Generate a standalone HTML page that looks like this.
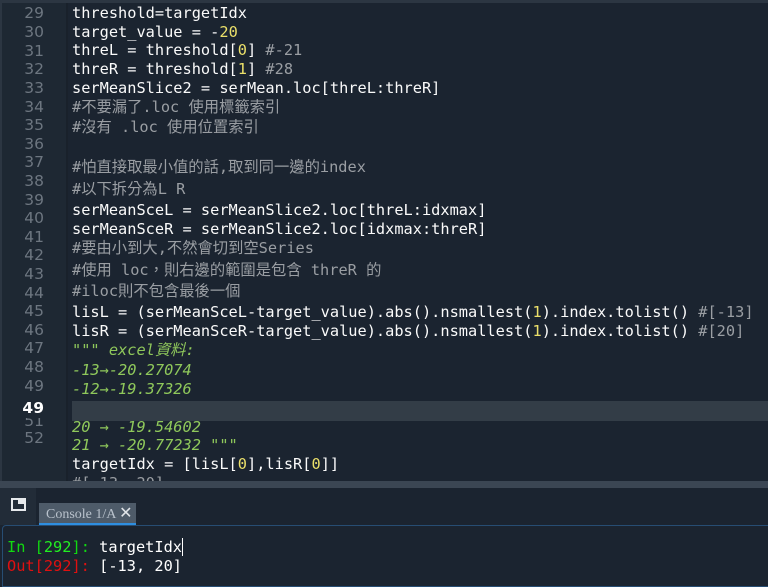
<!DOCTYPE html>
<html><head><meta charset="utf-8"><style>
*{margin:0;padding:0;box-sizing:border-box}
body{width:768px;height:584px;overflow:hidden;background:#1b2430;position:relative;font-family:"DejaVu Sans Mono","Liberation Mono","Noto Sans CJK TC",monospace;}
.ed{position:absolute;left:0;top:0;width:768px;height:481px;background:#1b2430;border-left:2px solid #2c3642;border-top:3px solid #2c3642;overflow:hidden}
.gut{position:absolute;left:0;top:0;width:66px;height:481px;background:#1e2833;border-right:2px solid #19212b}
.n{position:absolute;left:0;width:44px;text-align:right;color:#6d7680;font-size:15.5px;line-height:20px;font-family:"DejaVu Sans",sans-serif}
.l{position:absolute;left:72px;white-space:pre;font-size:15.3px;line-height:20px;color:#fafafa}
.c{color:#9a9ea3}
.y{color:#ebe06a}
.g{color:#8fc85b;font-style:italic}
.hl{position:absolute;left:70px;top:398px;width:700px;height:20px;background:#333d47}
.split{position:absolute;left:0;top:481px;width:768px;height:7px;background:#3b4653}
.ic{position:absolute;left:0;top:488px;width:36px;height:37px;background:#222c38}
.tab{position:absolute;left:39px;top:503px;width:97px;height:22px;background:#4e5b69;border-bottom:2px solid #2e8ee0;color:#b9c2cc;font-family:"Liberation Serif",serif;font-size:14px;line-height:20px;padding-left:7px}
.con{position:absolute;left:2px;top:525px;width:770px;height:62px;border:1px solid #274d73;border-radius:4px 0 0 0;background:#1b2430}
.cl{position:absolute;left:7px;white-space:pre;font-size:15.3px;line-height:19px}
</style></head><body>
<div class="ed">
<div class="gut"></div>
<div style="position:absolute;left:565px;top:-3px;width:95px;height:3px;background:#2e8ee0"></div>
<div class="hl"></div>
</div>
<div style="position:absolute;left:0;top:0;width:768px;height:481px;overflow:hidden">
<div class="n" style="top:3px">29</div>
<div class="n" style="top:22px">30</div>
<div class="n" style="top:41px">31</div>
<div class="n" style="top:59px">32</div>
<div class="n" style="top:78px">33</div>
<div class="n" style="top:97px">34</div>
<div class="n" style="top:115px">35</div>
<div class="n" style="top:134px">36</div>
<div class="n" style="top:152px">37</div>
<div class="n" style="top:171px">38</div>
<div class="n" style="top:190px">39</div>
<div class="n" style="top:208px">40</div>
<div class="n" style="top:227px">41</div>
<div class="n" style="top:245px">42</div>
<div class="n" style="top:264px">43</div>
<div class="n" style="top:283px">44</div>
<div class="n" style="top:301px">45</div>
<div class="n" style="top:320px">46</div>
<div class="n" style="top:338px">47</div>
<div class="n" style="top:357px">48</div>
<div class="n" style="top:376px">49</div>
<div class="n" style="top:411px">51</div>
<div style="position:absolute;left:2px;top:398px;width:64px;height:20px;background:#1e2833"></div>
<div class="n" style="top:398px;color:#fff;font-weight:bold">49</div>
<div class="n" style="top:428px">52</div>

<div class="l" style="top:3px">threshold=targetIdx</div>
<div class="l" style="top:22px">target_value = -<span class="y">20</span></div>
<div class="l" style="top:40px">threL = threshold[<span class="y">0</span>] <span class="c">#-21</span></div>
<div class="l" style="top:59px">threR = threshold[<span class="y">1</span>] <span class="c">#28</span></div>
<div class="l" style="top:78px">serMeanSlice2 = serMean.loc[threL:threR]</div>
<div class="l c" style="top:97px">#不要漏了.loc 使用標籤索引</div>
<div class="l c" style="top:117px">#沒有 .loc 使用位置索引</div>
<div class="l c" style="top:157px">#怕直接取最小值的話,取到同一邊的index</div>
<div class="l c" style="top:179px">#以下拆分為L R </div>
<div class="l" style="top:200px">serMeanSceL = serMeanSlice2.loc[threL:idxmax]</div>
<div class="l" style="top:219px">serMeanSceR = serMeanSlice2.loc[idxmax:threR]</div>
<div class="l c" style="top:238px">#要由小到大,不然會切到空Series</div>
<div class="l c" style="top:260px">#使用 loc，則右邊的範圍是包含 threR 的</div>
<div class="l c" style="top:281px">#iloc則不包含最後一個</div>
<div class="l" style="top:302px">lisL = (serMeanSceL-target_value).abs().nsmallest(<span class="y">1</span>).index.tolist() <span class="c">#[-13]</span></div>
<div class="l" style="top:321px">lisR = (serMeanSceR-target_value).abs().nsmallest(<span class="y">1</span>).index.tolist() <span class="c">#[20]</span></div>
<div class="l g" style="top:340px">""" excel資料:</div>
<div class="l g" style="top:360px">-13→-20.27074</div>
<div class="l g" style="top:379px">-12→-19.37326</div>
<div class="l g" style="top:417px">20 → -19.54602</div>
<div class="l g" style="top:435px">21 → -20.77232 """</div>
<div class="l" style="top:454px">targetIdx = [lisL[<span class="y">0</span>],lisR[<span class="y">0</span>]]</div>
<div class="l c" style="top:473px">#[-13, 20]</div>
</div>
<div class="split"></div>
<div class="ic"><div style="position:absolute;left:11px;top:10px;width:15px;height:13px;border:2px solid #e6e9ec"><div style="position:absolute;right:0;top:0;width:6px;height:4px;background:#e6e9ec"></div></div></div>
<div class="tab">Console 1/A <span style="font-family:'DejaVu Sans',sans-serif;font-size:16px;color:#e0e4e8">✕</span></div>
<div class="con"></div>
<div class="cl" style="top:538px"><span style="color:#11d911">In [</span><span style="color:#22ee22">292</span><span style="color:#11d911">]:</span> <span style="color:#fff">targetIdx</span><span style="border-left:1px solid #fff"></span></div>
<div class="cl" style="top:557px"><span style="color:#e01010">Out[292]:</span> <span style="color:#fff">[-13, 20]</span></div>
</body></html>
